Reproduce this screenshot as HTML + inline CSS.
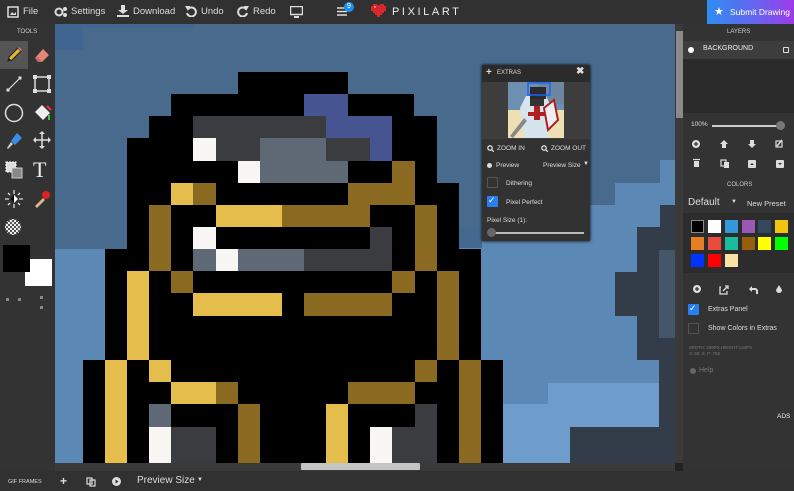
<!DOCTYPE html>
<html><head><meta charset="utf-8"><style>
*{margin:0;padding:0;box-sizing:border-box}
body{width:794px;height:491px;overflow:hidden;background:#333;font-family:"Liberation Sans",sans-serif;color:#eee;position:relative}
.a{position:absolute}
.t{position:absolute;font-size:9px;color:#ddd;white-space:nowrap}
.K{background:#000}.G{background:#e4bd4c}.B{background:#8a6920}.W{background:#f8f7f4}.D{background:#3b3c40}.M{background:#5f6875}.P{background:#465592}
.sw{position:absolute;width:13px;height:13px}
</style></head><body>
<!-- top bar -->
<div class="a" style="left:0;top:0;width:794px;height:24px;background:#313131"></div>
<svg class="a" style="left:7px;top:6px" width="12" height="12" viewBox="0 0 12 12"><rect x="1" y="1" width="10" height="10" fill="none" stroke="#ddd" stroke-width="1.5"/><path d="M3 9l2-3 2 2 2-2v3z" fill="#ddd"/></svg>
<div class="t" style="left:23px;top:6px;font-size:9.5px">File</div>
<svg class="a" style="left:54px;top:5px" width="14" height="14" viewBox="0 0 14 14"><circle cx="5" cy="7" r="3.5" fill="none" stroke="#ddd" stroke-width="2"/><circle cx="11" cy="4" r="2" fill="#ddd"/><circle cx="11" cy="10" r="2" fill="#ddd"/></svg>
<div class="t" style="left:71px;top:6px;font-size:9.5px">Settings</div>
<svg class="a" style="left:117px;top:5px" width="12" height="12" viewBox="0 0 12 12"><path d="M4 0h4v5h3L6 9 1 5h3z M0 10h12v2H0z" fill="#ddd"/></svg>
<div class="t" style="left:133px;top:6px;font-size:9.5px">Download</div>
<svg class="a" style="left:185px;top:5px" width="12" height="12" viewBox="0 0 12 12"><path d="M3 4A4.5 4.5 0 1 1 2 8" fill="none" stroke="#ddd" stroke-width="2"/><path d="M0 1l5 0-2 5z" fill="#ddd"/></svg>
<div class="t" style="left:201px;top:6px;font-size:9.5px">Undo</div>
<svg class="a" style="left:237px;top:5px" width="12" height="12" viewBox="0 0 12 12"><path d="M9 4A4.5 4.5 0 1 0 10 8" fill="none" stroke="#ddd" stroke-width="2"/><path d="M12 1L7 1l2 5z" fill="#ddd"/></svg>
<div class="t" style="left:253px;top:6px;font-size:9.5px">Redo</div>
<svg class="a" style="left:290px;top:6px" width="13" height="12" viewBox="0 0 13 12"><rect x="0.5" y="0.5" width="12" height="8" fill="none" stroke="#ddd" stroke-width="1.5"/><rect x="4" y="10" width="5" height="2" fill="#ddd"/></svg>
<svg class="a" style="left:337px;top:7px" width="10" height="9" viewBox="0 0 10 9"><path d="M0 1h10M0 4.5h10M0 8h10" stroke="#ddd" stroke-width="1.6"/></svg>
<div class="a" style="left:344px;top:2px;width:10px;height:10px;border-radius:50%;background:#1e8ff0;font-size:7px;color:#fff;text-align:center;line-height:10px">9</div>
<svg class="a" style="left:371px;top:4px" width="15" height="14" viewBox="0 0 15 14"><path d="M2 0h4v1h3V0h4v2h2v5h-2v2h-2v2H9v2H6v-2H4V9H2V7H0V2h2z" fill="#d8282c"/><rect x="3" y="2" width="2" height="2" fill="#f77"/></svg>
<div class="t" style="left:392px;top:6px;font-size:11px;letter-spacing:2.6px;color:#eee">PIXILART</div>
<div class="a" style="left:707px;top:0;width:87px;height:24px;background:linear-gradient(90deg,#2e8df2,#6a62ee 60%,#9d3be9)"></div>
<div class="t" style="left:714px;top:5px;font-size:11px;color:#fff">★</div>
<div class="t" style="left:730px;top:7px;font-size:8.5px;color:#fff">Submit Drawing</div>

<!-- left toolbar -->
<div class="a" style="left:0;top:24px;width:55px;height:447px;background:#333"></div>
<div class="t" style="left:17px;top:29px;font-size:6px;color:#ccc">TOOLS</div>
<div class="a" style="left:0;top:41px;width:28px;height:28px;background:#555"></div>
<svg class="a" style="left:5px;top:46px" width="18" height="18" viewBox="0 0 18 18"><path d="M3 15l1-4 9-9 3 3-9 9z" fill="#e8b82a" stroke="#222" stroke-width="1"/><path d="M13 2l3 3 1-1-3-3z" fill="#e77"/><path d="M3 15l1-3 2 2z" fill="#222"/></svg>
<svg class="a" style="left:33px;top:46px" width="18" height="18" viewBox="0 0 18 18"><path d="M2 12l8-9 6 6-7 7H5z" fill="#e58577"/><path d="M2 12l3 4h4l-4-5z" fill="#c86a5e"/></svg>
<svg class="a" style="left:5px;top:75px" width="18" height="18" viewBox="0 0 18 18"><path d="M3 15L15 3" stroke="#ddd" stroke-width="1.2"/><rect x="1.5" y="13.5" width="3" height="3" fill="#ddd"/><rect x="13.5" y="1.5" width="3" height="3" fill="#ddd"/></svg>
<svg class="a" style="left:32px;top:74px" width="20" height="20" viewBox="0 0 20 20"><rect x="3" y="3" width="14" height="14" fill="none" stroke="#ddd" stroke-width="1.5"/><rect x="1" y="1" width="4" height="4" fill="#ddd"/><rect x="15" y="1" width="4" height="4" fill="#ddd"/><rect x="1" y="15" width="4" height="4" fill="#ddd"/><rect x="15" y="15" width="4" height="4" fill="#ddd"/></svg>
<svg class="a" style="left:4px;top:103px" width="20" height="20"><circle cx="10" cy="10" r="8.5" fill="none" stroke="#ddd" stroke-width="1.5"/></svg>
<svg class="a" style="left:33px;top:103px" width="20" height="20" viewBox="0 0 20 20"><path d="M2 9l7-7 8 8-7 7z" fill="#eee"/><path d="M14 3l4 4" stroke="#e33" stroke-width="2"/><path d="M16 12v5" stroke="#3c3" stroke-width="2"/></svg>
<svg class="a" style="left:6px;top:131px" width="18" height="18" viewBox="0 0 18 18"><path d="M11 2l5 5-7 7-4-4z" fill="#3a8ee8"/><path d="M5 11l2 2-5 5-1-1z" fill="#ccc"/></svg>
<svg class="a" style="left:33px;top:131px" width="18" height="18" viewBox="0 0 18 18"><path d="M9 1v16M1 9h16" stroke="#ddd" stroke-width="1.5"/><path d="M9 0l3 3H6zM9 18l3-3H6zM0 9l3-3v6zM18 9l-3-3v6z" fill="#ddd"/></svg>
<svg class="a" style="left:5px;top:161px" width="18" height="18" viewBox="0 0 18 18"><rect x="1" y="1" width="10" height="10" fill="#ddd" stroke="#fff" stroke-dasharray="2 1"/><rect x="7" y="7" width="10" height="10" fill="#888" stroke="#ccc"/></svg>
<div class="t" style="left:33px;top:157px;font-size:22px;color:#eee;font-family:'Liberation Serif',serif">T</div>
<svg class="a" style="left:5px;top:190px" width="18" height="18" viewBox="0 0 18 18"><path d="M9 0v4M9 14v4M0 9h4M14 9h4M3 3l2 2M13 13l2 2M15 3l-2 2M3 15l2-2" stroke="#ddd" stroke-width="1.3"/><path d="M9 5l4 4-4 4-4-4z" fill="#fff"/><path d="M9 5v8l-4-4z" fill="#000"/></svg>
<svg class="a" style="left:33px;top:190px" width="18" height="18" viewBox="0 0 18 18"><path d="M2 16l8-8 2 2-8 8z" fill="#d9b98a"/><circle cx="13" cy="5" r="4" fill="#d22"/></svg>
<svg class="a" style="left:4px;top:218px" width="18" height="18" viewBox="0 0 18 18"><defs><pattern id="ck" width="4" height="4" patternUnits="userSpaceOnUse"><rect width="2" height="2" fill="#eee"/><rect x="2" y="2" width="2" height="2" fill="#eee"/><rect x="2" width="2" height="2" fill="#555"/><rect y="2" width="2" height="2" fill="#555"/></pattern></defs><circle cx="9" cy="9" r="8" fill="url(#ck)"/></svg>
<div class="a" style="left:25px;top:259px;width:27px;height:27px;background:#fff"></div>
<div class="a" style="left:3px;top:245px;width:27px;height:27px;background:#000"></div>
<div class="a" style="left:6px;top:298px;width:3px;height:3px;background:#888"></div>
<div class="a" style="left:18px;top:298px;width:3px;height:3px;background:#888"></div>
<div class="a" style="left:40px;top:296px;width:3px;height:3px;background:#888"></div>
<div class="a" style="left:40px;top:306px;width:3px;height:3px;background:#888"></div>

<!-- canvas -->
<div class="a" style="left:55px;top:24px;width:620px;height:439px;background:#476a8d;overflow:hidden">
<div class="a" style="left:0;top:0;width:28px;height:26px;background:#3f6590"></div>
<div class="a" style="left:28px;top:0;width:111px;height:4px;background:#436790"></div>
</div>
<div class="a" style="left:55px;top:249px;width:50px;height:214px;background:#5b88b4"></div>
<div class="a" style="left:459px;top:227px;width:216px;height:236px;background:#5b88b4"></div>
<div class="a" style="left:459px;top:227px;width:23px;height:21px;background:#446890"></div>
<div class="a" style="left:590px;top:205px;width:85px;height:22px;background:#5b88b4"></div>
<div class="a" style="left:615px;top:183px;width:60px;height:22px;background:#5b88b4"></div>
<div class="a" style="left:660px;top:160px;width:15px;height:23px;background:#5b88b4"></div>
<div class="a" style="left:660px;top:205px;width:15px;height:22px;background:#333d49"></div>
<div class="a" style="left:637px;top:227px;width:38px;height:45px;background:#333d49"></div>
<div class="a" style="left:615px;top:272px;width:60px;height:44px;background:#333d49"></div>
<div class="a" style="left:637px;top:316px;width:38px;height:44px;background:#333d49"></div>
<div class="a" style="left:659px;top:360px;width:16px;height:103px;background:#333d49"></div>
<div class="a" style="left:570px;top:427px;width:105px;height:36px;background:#333d49"></div>
<div class="a" style="left:659px;top:250px;width:16px;height:88px;background:#44566a"></div>
<div class="a" style="left:548px;top:383px;width:111px;height:21px;background:#6f9dcb"></div>
<div class="a" style="left:503px;top:404px;width:156px;height:23px;background:#6f9dcb"></div>
<div class="a" style="left:503px;top:427px;width:67px;height:36px;background:#6f9dcb"></div>

<div class="a K" style="left:238px;top:72px;width:110px;height:391px"></div>
<div class="a K" style="left:171px;top:94px;width:243px;height:369px"></div>
<div class="a K" style="left:149px;top:116px;width:288px;height:347px"></div>
<div class="a K" style="left:127px;top:138px;width:310px;height:325px"></div>
<div class="a K" style="left:127px;top:183px;width:332px;height:280px"></div>
<div class="a K" style="left:105px;top:249px;width:376px;height:214px"></div>
<div class="a K" style="left:83px;top:360px;width:420px;height:103px"></div>
<div class="a P" style="left:304px;top:94px;width:44px;height:22px"></div>
<div class="a D" style="left:193px;top:116px;width:133px;height:22px"></div>
<div class="a P" style="left:326px;top:116px;width:66px;height:22px"></div>
<div class="a W" style="left:193px;top:138px;width:23px;height:23px"></div>
<div class="a D" style="left:216px;top:138px;width:44px;height:23px"></div>
<div class="a M" style="left:260px;top:138px;width:66px;height:23px"></div>
<div class="a D" style="left:326px;top:138px;width:44px;height:23px"></div>
<div class="a P" style="left:370px;top:138px;width:22px;height:23px"></div>
<div class="a W" style="left:238px;top:161px;width:22px;height:22px"></div>
<div class="a M" style="left:260px;top:161px;width:88px;height:22px"></div>
<div class="a B" style="left:392px;top:161px;width:23px;height:22px"></div>
<div class="a G" style="left:171px;top:183px;width:22px;height:22px"></div>
<div class="a B" style="left:193px;top:183px;width:23px;height:22px"></div>
<div class="a B" style="left:348px;top:183px;width:67px;height:22px"></div>
<div class="a B" style="left:149px;top:205px;width:22px;height:66px"></div>
<div class="a G" style="left:216px;top:205px;width:66px;height:22px"></div>
<div class="a B" style="left:282px;top:205px;width:88px;height:22px"></div>
<div class="a B" style="left:415px;top:205px;width:22px;height:66px"></div>
<div class="a W" style="left:193px;top:227px;width:23px;height:22px"></div>
<div class="a D" style="left:370px;top:227px;width:22px;height:22px"></div>
<div class="a M" style="left:193px;top:249px;width:23px;height:22px"></div>
<div class="a W" style="left:216px;top:249px;width:22px;height:22px"></div>
<div class="a M" style="left:238px;top:249px;width:66px;height:22px"></div>
<div class="a D" style="left:304px;top:249px;width:88px;height:22px"></div>
<div class="a G" style="left:127px;top:271px;width:22px;height:89px"></div>
<div class="a B" style="left:171px;top:271px;width:22px;height:22px"></div>
<div class="a B" style="left:392px;top:271px;width:23px;height:22px"></div>
<div class="a B" style="left:437px;top:271px;width:22px;height:89px"></div>
<div class="a G" style="left:193px;top:293px;width:89px;height:23px"></div>
<div class="a B" style="left:304px;top:293px;width:88px;height:23px"></div>
<div class="a G" style="left:105px;top:360px;width:22px;height:103px"></div>
<div class="a G" style="left:149px;top:360px;width:22px;height:22px"></div>
<div class="a B" style="left:415px;top:360px;width:22px;height:22px"></div>
<div class="a B" style="left:459px;top:360px;width:22px;height:103px"></div>
<div class="a G" style="left:171px;top:382px;width:45px;height:22px"></div>
<div class="a B" style="left:216px;top:382px;width:22px;height:22px"></div>
<div class="a B" style="left:348px;top:382px;width:67px;height:22px"></div>
<div class="a M" style="left:149px;top:404px;width:22px;height:23px"></div>
<div class="a B" style="left:238px;top:404px;width:22px;height:59px"></div>
<div class="a G" style="left:326px;top:404px;width:22px;height:59px"></div>
<div class="a D" style="left:415px;top:404px;width:22px;height:23px"></div>
<div class="a W" style="left:149px;top:427px;width:22px;height:36px"></div>
<div class="a D" style="left:171px;top:427px;width:45px;height:36px"></div>
<div class="a W" style="left:370px;top:427px;width:22px;height:36px"></div>
<div class="a D" style="left:392px;top:427px;width:45px;height:36px"></div>

<div class="a" style="left:55px;top:463px;width:628px;height:8px;background:#3a3a3a"></div>
<div class="a" style="left:301px;top:463px;width:119px;height:7px;background:#c4c4c4;border-radius:1px"></div>
<div class="a" style="left:675px;top:24px;width:8px;height:439px;background:#3a3a3a"></div>
<div class="a" style="left:676px;top:31px;width:7px;height:87px;background:#8a8a8a"></div>
<div class="a" style="left:675px;top:463px;width:8px;height:8px;background:#222"></div>

<!-- extras panel -->
<div class="a" style="left:482px;top:65px;width:108px;height:176px;background:#323232;box-shadow:0 0 3px #000"></div>
<div class="a" style="left:482px;top:65px;width:108px;height:17px;background:#2b2b2b"></div>
<div class="t" style="left:486px;top:67px;font-size:10px;font-weight:bold">+</div>
<div class="t" style="left:497px;top:70px;font-size:6px">EXTRAS</div>
<div class="t" style="left:576px;top:66px;font-size:10px;font-weight:bold">✖</div>
<div class="a" style="left:482px;top:82px;width:108px;height:57px;background:#3d3d3d"></div>
<svg class="a" style="left:508px;top:82px" width="56" height="56" viewBox="0 0 56 56"><rect width="56" height="56" fill="#6d8fb2"/><rect y="28" width="56" height="28" fill="#efe0b4"/><rect x="30" y="0" width="26" height="22" fill="#6f86a0"/><path d="M18 14h20l6 12-4 30H16l-4-30z" fill="#d6e4ee"/><path d="M22 16h14v8H22z" fill="#333"/><path d="M26 24h6v14h-6z" fill="#b02020"/><path d="M20 30h18v4H20z" fill="#b02020"/><path d="M36 26l10-8 4 20-10 10z" fill="#eee" stroke="#a22" stroke-width="2"/><path d="M2 54l14-18 3 3L5 56z" fill="#888"/><path d="M22 5h16v12H22z" fill="#2b2b2b"/><rect x="20" y="1" width="22" height="12" fill="none" stroke="#1b63ff" stroke-width="1.5"/></svg>
<svg class="a" style="left:487px;top:145px" width="7" height="7"><circle cx="3" cy="3" r="2.2" fill="none" stroke="#ddd" stroke-width="1.3"/><path d="M4.5 4.5L7 7" stroke="#ddd" stroke-width="1.3"/></svg>
<div class="t" style="left:497px;top:145px;font-size:6.5px">ZOOM IN</div>
<svg class="a" style="left:541px;top:145px" width="7" height="7"><circle cx="3" cy="3" r="2.2" fill="none" stroke="#ddd" stroke-width="1.3"/><path d="M4.5 4.5L7 7" stroke="#ddd" stroke-width="1.3"/></svg>
<div class="t" style="left:551px;top:145px;font-size:6.5px">ZOOM OUT</div>
<div class="a" style="left:487px;top:163px;width:5px;height:5px;border-radius:50%;background:#ddd"></div>
<div class="t" style="left:496px;top:162px;font-size:6.5px">Preview</div>
<div class="t" style="left:543px;top:162px;font-size:6.5px">Preview Size</div>
<div class="t" style="left:583px;top:161px;font-size:6px">▼</div>
<div class="a" style="left:487px;top:177px;width:11px;height:11px;border:1px solid #555;border-radius:1px"></div>
<div class="t" style="left:506px;top:180px;font-size:6.5px">Dithering</div>
<div class="a" style="left:487px;top:196px;width:11px;height:11px;background:#2a7ff0;border-radius:1px"></div>
<div class="t" style="left:488px;top:195px;font-size:9px;color:#fff">✓</div>
<div class="t" style="left:506px;top:199px;font-size:6.5px">Pixel Perfect</div>
<div class="t" style="left:487px;top:217px;font-size:6.5px">Pixel Size (1):</div>
<div class="a" style="left:490px;top:232px;width:94px;height:2px;background:#bbb"></div>
<div class="a" style="left:487px;top:228px;width:9px;height:9px;border-radius:50%;background:#666"></div>

<!-- right panel -->
<div class="a" style="left:683px;top:24px;width:111px;height:447px;background:#333"></div>
<div class="t" style="left:727px;top:29px;font-size:6px;color:#ccc">LAYERS</div>
<div class="a" style="left:683px;top:41px;width:111px;height:18px;background:#3d3d3d"></div>
<div class="a" style="left:688px;top:47px;width:6px;height:6px;border-radius:50%;background:#fff"></div>
<div class="t" style="left:703px;top:45px;font-size:7px;color:#eee">BACKGROUND</div>
<div class="a" style="left:783px;top:47px;width:6px;height:6px;border:1px solid #ddd;border-radius:1px"></div>
<div class="a" style="left:683px;top:59px;width:111px;height:54px;background:#2a2a2a"></div>
<div class="t" style="left:691px;top:121px;font-size:6.5px">100%</div>
<div class="a" style="left:712px;top:125px;width:69px;height:2px;background:#ccc"></div>
<div class="a" style="left:776px;top:121px;width:9px;height:9px;border-radius:50%;background:#777"></div>
<svg class="a" style="left:691px;top:139px" width="100" height="30" viewBox="0 0 100 30">
<circle cx="5" cy="5" r="4" fill="#ddd"/><path d="M5 3v4M3 5h4" stroke="#333" stroke-width="1.3"/>
<path d="M33 1l4 4h-2v4h-4V5h-2z" fill="#ddd"/>
<path d="M61 9l4-4h-2V1h-4v4h-2z" fill="#ddd"/>
<rect x="85" y="2" width="6" height="6" fill="none" stroke="#ddd" stroke-width="1.2"/><path d="M86 7l5-6" stroke="#ddd" stroke-width="1.5"/>
<path d="M3 22h5v6H3z" fill="#ddd"/><path d="M2 20.5h7" stroke="#ddd" stroke-width="1.2"/>
<rect x="30" y="21" width="5" height="6" fill="none" stroke="#ddd" stroke-width="1.2"/><rect x="33" y="23" width="5" height="6" fill="#ddd"/>
<rect x="57" y="21" width="8" height="8" rx="1" fill="#ddd"/><path d="M59 26l2-2 2 2z" fill="#333"/>
<rect x="85" y="21" width="8" height="8" rx="1" fill="#ddd"/><path d="M87 24l2 2 2-2z" fill="#333"/>
</svg>
<div class="t" style="left:727px;top:182px;font-size:6px;color:#ccc">COLORS</div>
<div class="t" style="left:688px;top:197px;font-size:10px;color:#ddd">Default</div>
<div class="t" style="left:731px;top:199px;font-size:6px">▼</div>
<div class="t" style="left:747px;top:199px;font-size:7.5px;color:#ddd">New Preset</div>
<div class="a" style="left:683px;top:213px;width:111px;height:60px;background:#2c2c2c"></div>
<div class="sw" style="left:691px;top:220px;background:#000;border:1px solid #888"></div>
<div class="sw" style="left:708px;top:220px;background:#fff"></div>
<div class="sw" style="left:725px;top:220px;background:#3498db"></div>
<div class="sw" style="left:742px;top:220px;background:#9b59b6"></div>
<div class="sw" style="left:758px;top:220px;background:#34495e"></div>
<div class="sw" style="left:775px;top:220px;background:#f1c40f"></div>
<div class="sw" style="left:691px;top:237px;background:#e67e22"></div>
<div class="sw" style="left:708px;top:237px;background:#e74c3c"></div>
<div class="sw" style="left:725px;top:237px;background:#1abc9c"></div>
<div class="sw" style="left:742px;top:237px;background:#965f0d"></div>
<div class="sw" style="left:758px;top:237px;background:#ffff00"></div>
<div class="sw" style="left:775px;top:237px;background:#00ff00"></div>
<div class="sw" style="left:691px;top:254px;background:#0033ff"></div>
<div class="sw" style="left:708px;top:254px;background:#ff0000"></div>
<div class="sw" style="left:725px;top:254px;background:#f8e3a4"></div>
<svg class="a" style="left:692px;top:284px" width="100" height="12" viewBox="0 0 100 12">
<circle cx="5" cy="5" r="4" fill="#ddd"/><path d="M5 3v4M3 5h4" stroke="#333" stroke-width="1.3"/>
<path d="M29 3h-1v7h7V7" fill="none" stroke="#ddd" stroke-width="1.3"/><path d="M31 7l4-4M33 2h3v3" stroke="#ddd" stroke-width="1.3" fill="none"/>
<path d="M57 5l3-3v2h3a3 3 0 0 1 3 3v3h-2V7a1 1 0 0 0-1-1h-3v2z" fill="#ddd"/>
<path d="M87 1l3 5a3 3 0 0 1-6 0z" fill="#ddd"/>
</svg>
<div class="a" style="left:688px;top:304px;width:11px;height:11px;background:#2a7ff0;border-radius:1px"></div>
<div class="t" style="left:689px;top:303px;font-size:9px;color:#fff">✓</div>
<div class="t" style="left:708px;top:306px;font-size:7px">Extras Panel</div>
<div class="a" style="left:688px;top:323px;width:11px;height:11px;border:1px solid #555;border-radius:1px"></div>
<div class="t" style="left:708px;top:325px;font-size:7px">Show Colors in Extras</div>
<div class="t" style="left:689px;top:345px;font-size:4.5px;color:#777;line-height:6px">WIDTH: 256PX HEIGHT:144PX<br>X: 68, 8, P: 768</div>
<div class="a" style="left:690px;top:368px;width:6px;height:6px;border-radius:50%;background:#666"></div>
<div class="t" style="left:699px;top:367px;font-size:7px;color:#777">Help</div>
<div class="t" style="left:777px;top:413px;font-size:6.5px;color:#eee">ADS</div>

<!-- bottom bar -->
<div class="a" style="left:0;top:471px;width:794px;height:20px;background:#313131"></div>
<div class="t" style="left:8px;top:479px;font-size:5.5px">GIF FRAMES</div>
<div class="t" style="left:60px;top:474px;font-size:12px;font-weight:bold">+</div>
<svg class="a" style="left:86px;top:477px" width="10" height="10"><rect x="1" y="1" width="5" height="6" fill="none" stroke="#ddd" stroke-width="1.2"/><rect x="4" y="3" width="5" height="6" fill="none" stroke="#ddd" stroke-width="1.2"/></svg>
<svg class="a" style="left:112px;top:477px" width="9" height="9"><circle cx="4.5" cy="4.5" r="4.5" fill="#ddd"/><path d="M3.5 2.5l3 2-3 2z" fill="#333"/></svg>
<div class="t" style="left:137px;top:475px;font-size:10px">Preview Size</div>
<div class="t" style="left:197px;top:477px;font-size:6px">▼</div>
</body></html>
